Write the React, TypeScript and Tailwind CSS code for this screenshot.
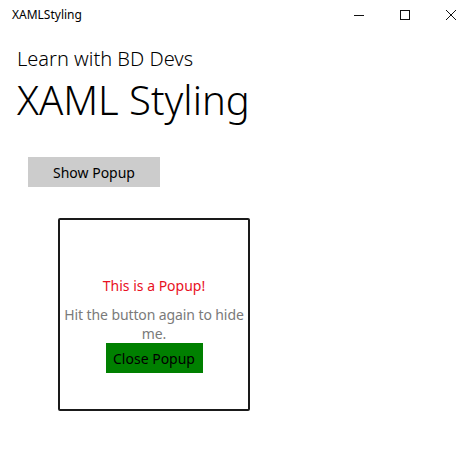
const font = { fontFamily: '"Segoe UI", "Noto Sans", "Open Sans", sans-serif' };

function TitleBar() {
  return (
    <div className="flex items-center h-[30px] bg-white">
      <span className="pl-[12px] text-[12px] text-black">XAMLStyling</span>
      <div className="ml-auto flex items-center h-full">
        <div className="w-[46px] h-full flex items-center justify-center">
          <svg width="10" height="10" viewBox="0 0 10 10">
            <path d="M0 5.5h10" stroke="#111" strokeWidth="1" />
          </svg>
        </div>
        <div className="w-[46px] h-full flex items-center justify-center">
          <svg width="10" height="10" viewBox="0 0 10 10">
            <rect x="0.5" y="0.5" width="9" height="9" fill="none" stroke="#111" strokeWidth="1" />
          </svg>
        </div>
        <div className="w-[46px] h-full flex items-center justify-center">
          <svg width="10" height="10" viewBox="0 0 10 10">
            <path d="M0 0L10 10M10 0L0 10" stroke="#111" strokeWidth="1" />
          </svg>
        </div>
      </div>
    </div>
  );
}

export default function App() {
  return (
    <div className="w-[474px] h-[472px] bg-white text-black overflow-hidden" style={font}>
      <TitleBar />
      <div className="pl-[17px] pt-[16px]">
        <div className="text-[20px] leading-[26px] font-light">Learn with BD Devs</div>
        <div className="text-[40px] leading-[48px] font-light mt-[4px]">XAML Styling</div>
      </div>
      <div className="pl-[28px] mt-[33px]">
        <button className="w-[132px] h-[30px] bg-[#cccccc] text-[14px] text-black">
          Show Popup
        </button>
      </div>
      <div className="ml-[58px] mt-[31px] w-[192px] h-[193px] border-2 border-[#1a1a1a] rounded-[2px] flex flex-col items-center pt-[56px]">
        <div className="text-[14px] leading-[20px] text-[#e81123]">This is a Popup!</div>
        <div className="mt-[9px] text-[14px] leading-[19px] tracking-[-0.1px] text-[#7a7a7a] text-center">
          Hit the button again to hide me.
        </div>
        <div className="w-[97px] h-[30px] bg-[#008000] flex items-center justify-center text-[14px] text-black">
          Close Popup
        </div>
      </div>
    </div>
  );
}
